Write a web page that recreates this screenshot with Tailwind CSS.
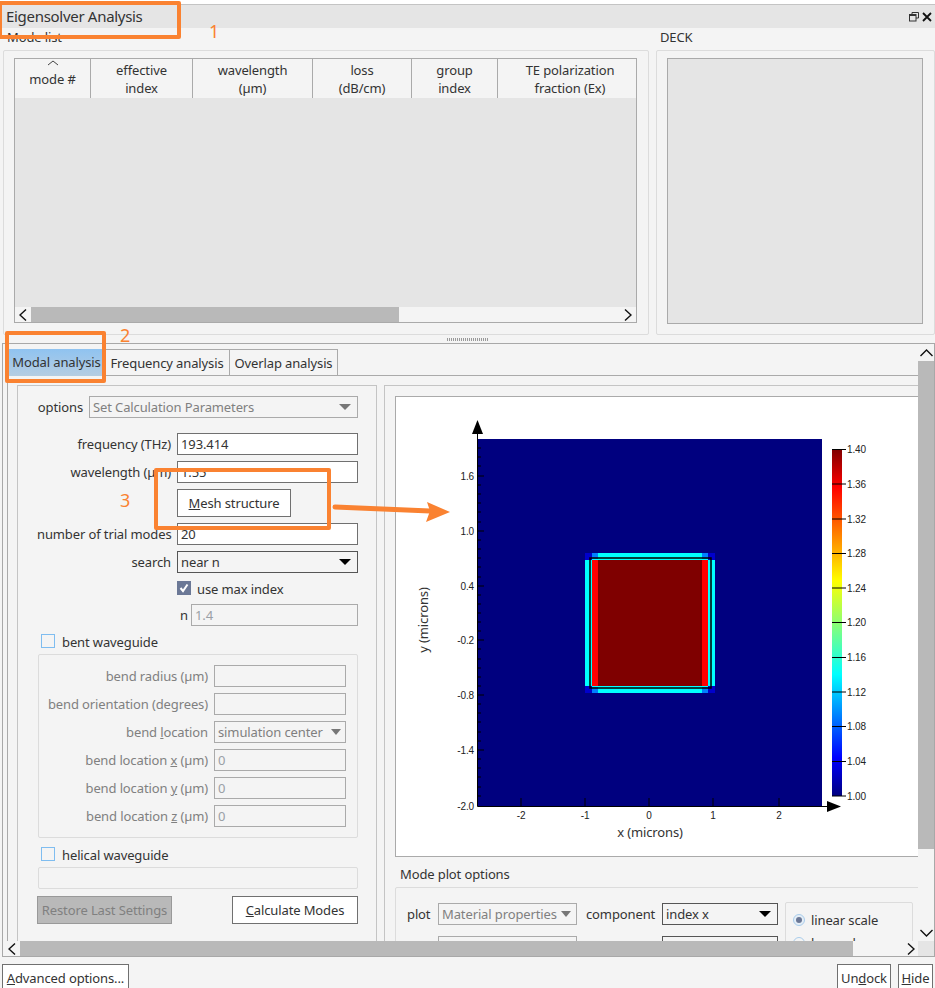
<!DOCTYPE html>
<html lang="en">
 <head>
  <meta charset="utf-8"/>
  <title>Eigensolver Analysis</title>
  <script src="https://cdn.jsdelivr.net/npm/@tailwindcss/browser@4"></script>
 </head>
 <body class="bg-[#f4f4f4] font-['Noto_Sans',sans-serif] text-[13px] leading-[18px] tracking-[-0.12px] text-[#333333]">
  <div class="relative w-[935px] h-[988px] overflow-hidden">
   <div class="h-[4px] bg-white"></div>
   <!-- title bar -->
   <div class="h-[24px] bg-[#e5e5e5] border-t border-[#c4c4c4] flex items-center justify-between pl-[6px] pr-[3px]">
    <span class="text-[15px] tracking-[-0.3px] pb-[2px]">Eigensolver Analysis</span>
    <div class="flex items-center gap-[3px]">
     <svg width="10" height="10" viewBox="0 0 10 10" fill="none" stroke="#333" stroke-width="1"><path d="M3 2.500V.5H9.500V6H7"/><rect x=".5" y="2.500" width="6.500" height="6.500"/><path d="M.5 3.500H7"/></svg>
     <svg width="10" height="10" viewBox="0 0 10 10" fill="none" stroke="#111" stroke-width="1.800"><path d="M1 1L9 9M9 1L1 9"/></svg>
    </div>
   </div>
   <!-- mode list + deck -->
   <div class="h-[307px] flex pl-[3px]">
    <div class="w-[646px]">
     <div class="h-[22px] pl-[4px]">Mode list</div>
     <div class="h-[285px] border border-[#dcdcdc] rounded-[2px] pl-[10px] pt-[7px]">
      <div class="w-[623px] h-[265px] border border-[#aaaaaa] flex flex-col">
       <div class="h-[39px] bg-[#f4f4f4] flex text-center leading-[18px] shrink-0">
        <div class="w-[76px] border-r border-[#aaaaaa] relative pt-[11px]"><svg class="absolute left-[32px] top-[1px]" width="12" height="6" viewBox="0 0 12 6" fill="none" stroke="#444" stroke-width="1"><path d="M1 5L6 1L11 5"/></svg>mode #</div>
        <div class="w-[102px] border-r border-[#aaaaaa] pt-[2px]">effective<br/>index</div>
        <div class="w-[120px] border-r border-[#aaaaaa] pt-[2px]">wavelength<br/>(µm)</div>
        <div class="w-[99px] border-r border-[#aaaaaa] pt-[2px]">loss<br/>(dB/cm)</div>
        <div class="w-[86px] border-r border-[#aaaaaa] pt-[2px]">group<br/>index</div>
        <div class="flex-1 pt-[2px] pl-[6px]">TE polarization<br/>fraction (Ex)</div>
       </div>
       <div class="flex-1 bg-[#e5e5e5]"></div>
       <div class="h-[15px] flex shrink-0 bg-[#f4f4f4]">
        <div class="w-[16px] flex items-center justify-center"><svg width="8" height="12" viewBox="0 0 8 12" fill="none" stroke="#111" stroke-width="1.400"><path d="M7 .5L1 6L7 11.500"/></svg></div>
        <div class="w-[368px] bg-[#b9b9b9]"></div>
        <div class="flex-1"></div>
        <div class="w-[16px] flex items-center justify-center"><svg width="8" height="12" viewBox="0 0 8 12" fill="none" stroke="#111" stroke-width="1.400"><path d="M1 .5L7 6L1 11.500"/></svg></div>
       </div>
      </div>
     </div>
    </div>
    <div class="w-[279px] ml-[7px]">
     <div class="h-[22px] pl-[4px]">DECK</div>
     <div class="h-[285px] border border-[#dcdcdc] rounded-[2px] pl-[10px] pt-[7px]">
      <div class="w-[256px] h-[266px] border border-[#aaaaaa] bg-[#e5e5e5]"></div>
     </div>
    </div>
   </div>
   <!-- splitter -->
   <div class="h-[8px] flex items-center justify-center">
    <div class="w-[42px] h-[3px] bg-[repeating-linear-gradient(90deg,#9a9a9a_0,#9a9a9a_1px,transparent_1px,transparent_2px)]"></div>
   </div>
   <!-- lower dock -->
   <div class="ml-[2px] h-[614px] border border-[#a8a8a8] flex flex-col">
    <div class="flex h-[597px]">
     <div class="w-[915px] overflow-hidden">
      <div class="flex pl-[5px] pt-[5px] h-[31px] leading-[26px]">
       <div class="w-[97px] h-[27px] text-center bg-gradient-to-b from-[#8fc3f0] to-[#b5cde2]">Modal analysis</div>
       <div class="w-[125px] h-[27px] text-center border-t border-r border-[#aaaaaa]">Frequency analysis</div>
       <div class="w-[108px] h-[27px] text-center border-t border-r border-[#aaaaaa]">Overlap analysis</div>
      </div>
      <div class="ml-[4px] border-l border-t border-[#aaaaaa] pl-[9px] pt-[9px] flex gap-[7px] h-[600px]">
       <!-- left form -->
       <div class="w-[360px] h-[600px] shrink-0 border border-[#c4c4c4] pl-[19px]">
        <div class="flex items-center mt-[10px]">
         <span class="w-[46px] text-right">options</span>
         <div class="ml-[6px] w-[269px] h-[22px] border border-[#aaaaaa] flex items-center justify-between pl-[3px] pr-[5px] text-[#808080]">Set Calculation Parameters<svg width="14" height="8" viewBox="0 0 14 8"><polygon points="1,1 13,1 7,7" fill="#777"/></svg></div>
        </div>
        <div class="flex items-center mt-[15px]">
         <span class="w-[134px] text-right">frequency (THz)</span>
         <div class="ml-[6px] w-[181px] h-[22px] border border-[#707070] bg-white pl-[3px] leading-[20px]">193.414</div>
        </div>
        <div class="flex items-center mt-[6px]">
         <span class="w-[134px] text-right">wavelength (µm)</span>
         <div class="ml-[6px] w-[181px] h-[22px] border border-[#707070] bg-white pl-[3px] leading-[20px]">1.55</div>
        </div>
        <div class="ml-[140px] mt-[6px] w-[114px] h-[28px] border border-[#707070] bg-white text-center leading-[26px]"><u>M</u>esh structure</div>
        <div class="flex items-center mt-[6px]">
         <span class="w-[134px] text-right whitespace-nowrap">number of trial modes</span>
         <div class="ml-[6px] w-[181px] h-[22px] border border-[#707070] bg-white pl-[3px] leading-[20px]">20</div>
        </div>
        <div class="flex items-center mt-[6px]">
         <span class="w-[134px] text-right">search</span>
         <div class="ml-[6px] w-[181px] h-[22px] border border-[#555555] flex items-center justify-between pl-[3px] pr-[5px]">near n<svg width="14" height="8" viewBox="0 0 14 8"><polygon points="1,1 13,1 7,7" fill="#000"/></svg></div>
        </div>
        <div class="flex items-center mt-[8px] ml-[140px] h-[14px]">
         <div class="w-[14px] h-[14px] bg-[#6b7896] flex items-center justify-center"><svg width="10" height="10" viewBox="0 0 10 10" fill="none" stroke="#fff" stroke-width="2"><path d="M1.500 5L4 8L8.500 1.500"/></svg></div>
         <span class="ml-[6px] translate-y-[1px]">use max index</span>
        </div>
        <div class="flex items-center mt-[9px] ml-[140px]">
         <span class="w-[14px] text-center">n</span>
         <div class="w-[167px] h-[22px] border border-[#aaaaaa] pl-[3px] leading-[20px] text-[#9aa0a6]">1.4</div>
        </div>
        <div class="flex items-center mt-[8px] h-[14px] ml-[4px]">
         <div class="w-[14px] h-[14px] border border-[#7fbdf0]"></div>
         <span class="ml-[7px] translate-y-[1px]">bent waveguide</span>
        </div>
        <div class="mt-[6px] ml-[1px] w-[320px] h-[184px] border border-[#dcdcdc] rounded-[2px] pt-[10px] text-[#808080]">
         <div class="flex items-center">
          <span class="w-[169px] text-right">bend radius (µm)</span>
          <div class="ml-[6px] w-[132px] h-[22px] border border-[#aaaaaa]"></div>
         </div>
         <div class="flex items-center mt-[6px]">
          <span class="w-[169px] text-right">bend orientation (degrees)</span>
          <div class="ml-[6px] w-[132px] h-[22px] border border-[#aaaaaa]"></div>
         </div>
         <div class="flex items-center mt-[6px]">
          <span class="w-[169px] text-right">bend <u>l</u>ocation</span>
          <div class="ml-[6px] w-[132px] h-[22px] border border-[#aaaaaa] flex items-center justify-between pl-[3px] pr-[3px] whitespace-nowrap">simulation center<svg width="12" height="8" viewBox="0 0 12 8"><polygon points="1,1 11,1 6,7" fill="#777"/></svg></div>
         </div>
         <div class="flex items-center mt-[6px]">
          <span class="w-[169px] text-right">bend location <u>x</u> (µm)</span>
          <div class="ml-[6px] w-[132px] h-[22px] border border-[#aaaaaa] pl-[3px] leading-[20px] text-[#9aa0a6]">0</div>
         </div>
         <div class="flex items-center mt-[6px]">
          <span class="w-[169px] text-right">bend location <u>y</u> (µm)</span>
          <div class="ml-[6px] w-[132px] h-[22px] border border-[#aaaaaa] pl-[3px] leading-[20px] text-[#9aa0a6]">0</div>
         </div>
         <div class="flex items-center mt-[6px]">
          <span class="w-[169px] text-right">bend location <u>z</u> (µm)</span>
          <div class="ml-[6px] w-[132px] h-[22px] border border-[#aaaaaa] pl-[3px] leading-[20px] text-[#9aa0a6]">0</div>
         </div>
        </div>
        <div class="flex items-center mt-[9px] h-[14px] ml-[4px]">
         <div class="w-[14px] h-[14px] border border-[#7fbdf0]"></div>
         <span class="ml-[7px] translate-y-[1px]">helical waveguide</span>
        </div>
        <div class="mt-[6px] ml-[1px] w-[320px] h-[22px] border border-[#dcdcdc] rounded-[2px]"></div>
        <div class="flex justify-between mt-[7px] w-[321px]">
         <div class="w-[135px] h-[28px] border border-[#999999] bg-[#b9b9b9] text-center leading-[26px] text-[#808080]">Restore Last Settings</div>
         <div class="w-[126px] h-[28px] border border-[#707070] bg-white text-center leading-[26px]"><u>C</u>alculate Modes</div>
        </div>
       </div>
       <!-- plot panel -->
       <div class="w-[560px] shrink-0 border border-[#c4c4c4] pl-[10px] pt-[10px]">
        <div class="w-[530px] h-[461px] bg-white border border-[#aaaaaa]">
         <svg width="523" height="459" viewBox="396 397 523 459" font-family="Liberation Sans, sans-serif" font-size="10" fill="#222">
          <defs>
           <linearGradient id="jet" x1="0" y1="1" x2="0" y2="0">
            <stop offset="0" stop-color="#00007f"/>
            <stop offset=".11" stop-color="#0000ff"/>
            <stop offset=".35" stop-color="#00ffff"/>
            <stop offset=".62" stop-color="#ffff00"/>
            <stop offset=".89" stop-color="#ff0000"/>
            <stop offset="1" stop-color="#7f0000"/>
           </linearGradient>
          </defs>
          <rect x="477" y="439" width="345" height="367" fill="#00007f"/>
          <!-- waveguide -->
          <rect x="585" y="553" width="130" height="140" fill="#00ffff"/>
          <rect x="585" y="553" width="7" height="7" fill="#0000cc"/>
          <rect x="708" y="553" width="7" height="7" fill="#0000cc"/>
          <rect x="585" y="686" width="7" height="7" fill="#0000cc"/>
          <rect x="708" y="686" width="7" height="7" fill="#0000cc"/>
          <rect x="592" y="553" width="6" height="7" fill="#0080ff"/>
          <rect x="702" y="553" width="6" height="7" fill="#0080ff"/>
          <rect x="592" y="686" width="6" height="7" fill="#0080ff"/>
          <rect x="702" y="686" width="6" height="7" fill="#0080ff"/>
          <rect x="592" y="560" width="116" height="126" fill="#ff0000"/>
          <rect x="598" y="560" width="104" height="126" fill="#7f0000"/>
          <rect x="590" y="558" width="121" height="130" fill="none" stroke="#000" stroke-width="1.500"/>
          <path d="M592 559.500H708M592 686.500H708" stroke="#00ffff" stroke-width="1"/>
          <!-- axes -->
          <path d="M477.500 430V806.500H832" stroke="#000" stroke-width="1" fill="none"/>
          <polygon points="477.500,420 483,434 472,434" fill="#000"/>
          <polygon points="841,806.500 827,801 827,812" fill="#000"/>
          <path d="M477 448h4M477 457h4M477 466h4M477 476h7M477 485h4M477 494h4M477 503h4M477 512h4M477 522h4M477 531h7M477 540h4M477 549h4M477 558h4M477 567h4M477 577h4M477 586h7M477 595h4M477 604h4M477 613h4M477 622h4M477 631h4M477 640h7M477 649h4M477 659h4M477 668h4M477 677h4M477 686h4M477 695h7M477 704h4M477 713h4M477 722h4M477 732h4M477 741h4M477 750h7M477 759h4M477 768h4M477 777h4M477 787h4M477 796h4" stroke="#000" stroke-width="1" fill="none"/>
          <path d="M521 798v8M585 798v8M649 798v8M713 798v8M779 798v8" stroke="#000" stroke-width="1" fill="none"/>
          <text x="474" y="480" text-anchor="end">1.6</text>
          <text x="474" y="535" text-anchor="end">1.0</text>
          <text x="474" y="590" text-anchor="end">0.4</text>
          <text x="474" y="644" text-anchor="end">-0.2</text>
          <text x="474" y="699" text-anchor="end">-0.8</text>
          <text x="474" y="754" text-anchor="end">-1.4</text>
          <text x="474" y="810" text-anchor="end">-2.0</text>
          <text x="521" y="819" text-anchor="middle">-2</text>
          <text x="585" y="819" text-anchor="middle">-1</text>
          <text x="649" y="819" text-anchor="middle">0</text>
          <text x="713" y="819" text-anchor="middle">1</text>
          <text x="779" y="819" text-anchor="middle">2</text>
          <text x="650" y="837" text-anchor="middle" font-family="Noto Sans, sans-serif" font-size="13" fill="#333">x (microns)</text>
          <text transform="translate(428 620) rotate(-90)" text-anchor="middle" font-family="Noto Sans, sans-serif" font-size="13" fill="#333">y (microns)</text>
          <!-- colour bar -->
          <rect x="832" y="449" width="10" height="347" fill="url(#jet)"/>
          <path d="M832 449.500h14M832 484h14M832 519h14M832 553.500h14M832 588h14M832 622.500h14M832 657.500h14M832 692h14M832 726.500h14M832 761.500h14M832 796h14" stroke="#000" stroke-width="1" fill="none"/>
          <text x="847" y="453">1.40</text>
          <text x="847" y="488">1.36</text>
          <text x="847" y="523">1.32</text>
          <text x="847" y="557">1.28</text>
          <text x="847" y="592">1.24</text>
          <text x="847" y="626">1.20</text>
          <text x="847" y="661">1.16</text>
          <text x="847" y="696">1.12</text>
          <text x="847" y="730">1.08</text>
          <text x="847" y="765">1.04</text>
          <text x="847" y="800">1.00</text>
         </svg>
        </div>
        <div class="h-[30px] pl-[5px] pt-[8px]">Mode plot options</div>
        <div class="w-[530px] h-[80px] border border-[#dcdcdc] rounded-[2px] pt-[15px] flex">
         <div class="w-[389px]">
          <div class="flex items-center">
           <span class="ml-[11px] w-[31px]">plot</span>
           <div class="w-[139px] h-[22px] border border-[#aaaaaa] flex items-center justify-between pl-[3px] pr-[3px] text-[#808080] whitespace-nowrap">Material properties<svg width="14" height="8" viewBox="0 0 14 8"><polygon points="2,1 12,1 7,7" fill="#777"/></svg></div>
           <span class="ml-[9px] w-[76px]">component</span>
           <div class="w-[116px] h-[22px] border border-[#555555] flex items-center justify-between pl-[3px] pr-[5px]">index x<svg width="14" height="8" viewBox="0 0 14 8"><polygon points="1,1 13,1 7,7" fill="#000"/></svg></div>
          </div>
          <div class="flex items-center mt-[11px]">
           <div class="ml-[42px] w-[139px] h-[22px] border border-[#aaaaaa]"></div>
           <div class="ml-[85px] w-[116px] h-[22px] border border-[#555555]"></div>
          </div>
         </div>
         <div class="w-[128px] h-[60px] -mt-[1px] border border-[#dcdcdc] rounded-[2px] pl-[7px] pt-[8px]">
          <div class="flex items-center h-[18px]">
           <div class="w-[12px] h-[12px] rounded-full border border-[#a9cdec] bg-[#e5eef6] flex items-center justify-center"><div class="w-[6px] h-[6px] rounded-full bg-[#6b7896]"></div></div>
           <span class="ml-[6px]">linear scale</span>
          </div>
          <div class="flex items-center h-[18px] mt-[5px]">
           <div class="w-[12px] h-[12px] rounded-full border border-[#a9cdec]"></div>
           <span class="ml-[6px]">log scale</span>
          </div>
         </div>
        </div>
       </div>
      </div>
     </div>
     <!-- vertical scrollbar -->
     <div class="w-[16px] shrink-0 flex flex-col">
      <div class="h-[17px] flex items-center justify-center"><svg width="13" height="8" viewBox="0 0 13 8" fill="none" stroke="#111" stroke-width="1.400"><path d="M.5 7L6.500 1L12.500 7"/></svg></div>
      <div class="h-[488px] bg-[#b9b9b9]"></div>
      <div class="flex-1 flex items-end justify-center pb-[4px]"><svg width="13" height="8" viewBox="0 0 13 8" fill="none" stroke="#111" stroke-width="1.400"><path d="M.5 1L6.500 7L12.500 1"/></svg></div>
     </div>
    </div>
    <!-- horizontal scrollbar -->
    <div class="h-[15px] flex">
     <div class="w-[17px] flex items-center justify-center"><svg width="8" height="12" viewBox="0 0 8 12" fill="none" stroke="#111" stroke-width="1.400"><path d="M7 .5L1 6L7 11.500"/></svg></div>
     <div class="w-[833px] bg-[#b9b9b9]"></div>
     <div class="w-[50px]"></div>
     <div class="w-[15px] flex items-center justify-center"><svg width="8" height="12" viewBox="0 0 8 12" fill="none" stroke="#111" stroke-width="1.400"><path d="M1 .5L7 6L1 11.500"/></svg></div>
     <div class="w-[16px] bg-[#e5e5e5]"></div>
    </div>
   </div>
   <!-- bottom buttons -->
   <div class="flex pl-[2px] pr-[2px] pt-[7px]">
    <div class="w-[127px] h-[30px] border border-[#707070] bg-white text-center leading-[26px]"><u>A</u>dvanced options...</div>
    <div class="ml-auto w-[54px] h-[30px] border border-[#707070] bg-white text-center leading-[26px]">Un<u>d</u>ock</div>
    <div class="ml-[7px] w-[35px] h-[30px] border border-[#707070] bg-white text-center leading-[26px]"><u>H</u>ide</div>
   </div>
   <!-- orange annotations -->
   <div class="absolute left-[-2px] top-[1px] w-[183px] h-[38px] border-[4px] border-[#fa8231] rounded-[2px]"></div>
   <div class="absolute left-[5px] top-[331px] w-[101px] h-[52px] border-[4px] border-[#fa8231] rounded-[2px]"></div>
   <div class="absolute left-[154px] top-[468px] w-[177px] h-[62px] border-[4px] border-[#fa8231] rounded-[2px]"></div>
   <div class="absolute left-[209px] top-[20px] text-[18px] leading-[22px] text-[#fa8231]">1</div>
   <div class="absolute left-[120px] top-[324px] text-[18px] leading-[22px] text-[#fa8231]">2</div>
   <div class="absolute left-[120px] top-[489px] text-[18px] leading-[22px] text-[#fa8231]">3</div>
   <svg class="absolute left-[330px] top-[495px]" width="125" height="30" viewBox="0 0 125 30"><path d="M5 12L100 16" stroke="#fa8231" stroke-width="5" stroke-linecap="round"/><polygon points="97,7 120,17 96,27 100,16" fill="#fa8231"/></svg>
  </div>
 </body>
</html>
